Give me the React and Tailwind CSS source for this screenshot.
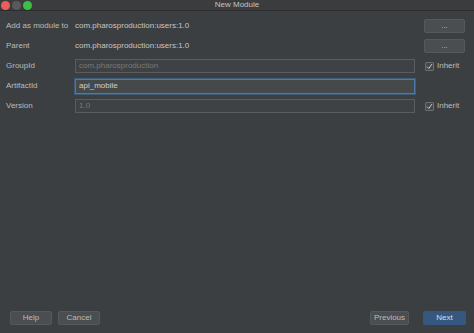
import React from "react";

const font = { fontFamily: '"Liberation Sans", Arial, sans-serif' };

function Check() {
  return (
    <span className="flex h-[9px] w-[9px] items-center justify-center rounded-[1px] border border-[#6b6e70] bg-[#43494a]">
      <svg width="7" height="7" viewBox="0 0 7 7">
        <path d="M1 3.6 L2.8 5.5 L6 1" fill="none" stroke="#c8c8c8" strokeWidth="1" />
      </svg>
    </span>
  );
}

function Btn({ children, primary, className = "" }) {
  return (
    <div
      className={`flex h-[14px] items-center justify-center rounded-[2px] text-[8px] ${
        primary
          ? "bg-[#365880] text-[#d8dde3]"
          : "border border-[#55595b] bg-[#4a4e50] text-[#bbbbbb]"
      } ${className}`}
    >
      {children}
    </div>
  );
}

export default function App() {
  return (
    <div className="flex h-[333px] w-[474px] flex-col bg-[#3c3f41] text-[#bbbbbb]" style={font}>
      {/* TITLE BAR */}
      <div className="relative flex h-[11px] items-center justify-center border-b border-[#2b2d2e] bg-[#3a3c3e]">
        <div className="absolute left-[1px] top-[1px] flex gap-[2px]">
          <span className="h-[9px] w-[9px] rounded-full bg-[#ec5f59]" />
          <span className="h-[9px] w-[9px] rounded-full bg-[#585a5c]" />
          <span className="h-[9px] w-[9px] rounded-full bg-[#3cbf46]" />
        </div>
        <span className="text-[8px] leading-none text-[#c4c4c4]">New Module</span>
      </div>

      {/* FORM */}
      <div className="flex flex-col pt-[5px] text-[8px]">
        <div className="flex h-[20px] items-center">
          <span className="w-[75px] pl-[6px]">Add as module to</span>
          <span className="flex-1 text-[#c6c6c6]">com.pharosproduction:users:1.0</span>
          <Btn className="mr-[9px] w-[41px]">...</Btn>
        </div>
        <div className="flex h-[20px] items-center">
          <span className="w-[75px] pl-[6px]">Parent</span>
          <span className="flex-1 text-[#c6c6c6]">com.pharosproduction:users:1.0</span>
          <Btn className="mr-[9px] w-[41px]">...</Btn>
        </div>
        <div className="flex h-[20px] items-center">
          <span className="w-[75px] pl-[6px]">GroupId</span>
          <div className="flex h-[14px] w-[340px] items-center border border-[#5a5d5f] bg-[#3f4244] pl-[3px] text-[#76797b]">
            com.pharosproduction
          </div>
          <div className="ml-[10px] flex items-center gap-[3px]">
            <Check />
            <span>Inherit</span>
          </div>
        </div>
        <div className="flex h-[20px] items-center">
          <span className="w-[75px] pl-[6px]">ArtifactId</span>
          <div className="flex h-[15px] w-[340px] items-center border border-[#4a7aab] bg-[#45494a] pl-[3px] text-[#d0d0d0] shadow-[0_0_0_1px_#3b5c7d]">
            api_mobile
          </div>
        </div>
        <div className="flex h-[20px] items-center">
          <span className="w-[75px] pl-[6px]">Version</span>
          <div className="flex h-[14px] w-[340px] items-center border border-[#5a5d5f] bg-[#3f4244] pl-[3px] text-[#76797b]">
            1.0
          </div>
          <div className="ml-[10px] flex items-center gap-[3px]">
            <Check />
            <span>Inherit</span>
          </div>
        </div>
      </div>

      {/* FOOTER */}
      <div className="mt-auto flex items-center px-[10px] pb-[8px]">
        <Btn className="w-[42px]">Help</Btn>
        <Btn className="ml-[6px] w-[42px]">Cancel</Btn>
        <div className="flex-1" />
        <Btn className="w-[39px]">Previous</Btn>
        <Btn primary className="ml-[14px] w-[43px] mr-[-2px]">Next</Btn>
      </div>
    </div>
  );
}
